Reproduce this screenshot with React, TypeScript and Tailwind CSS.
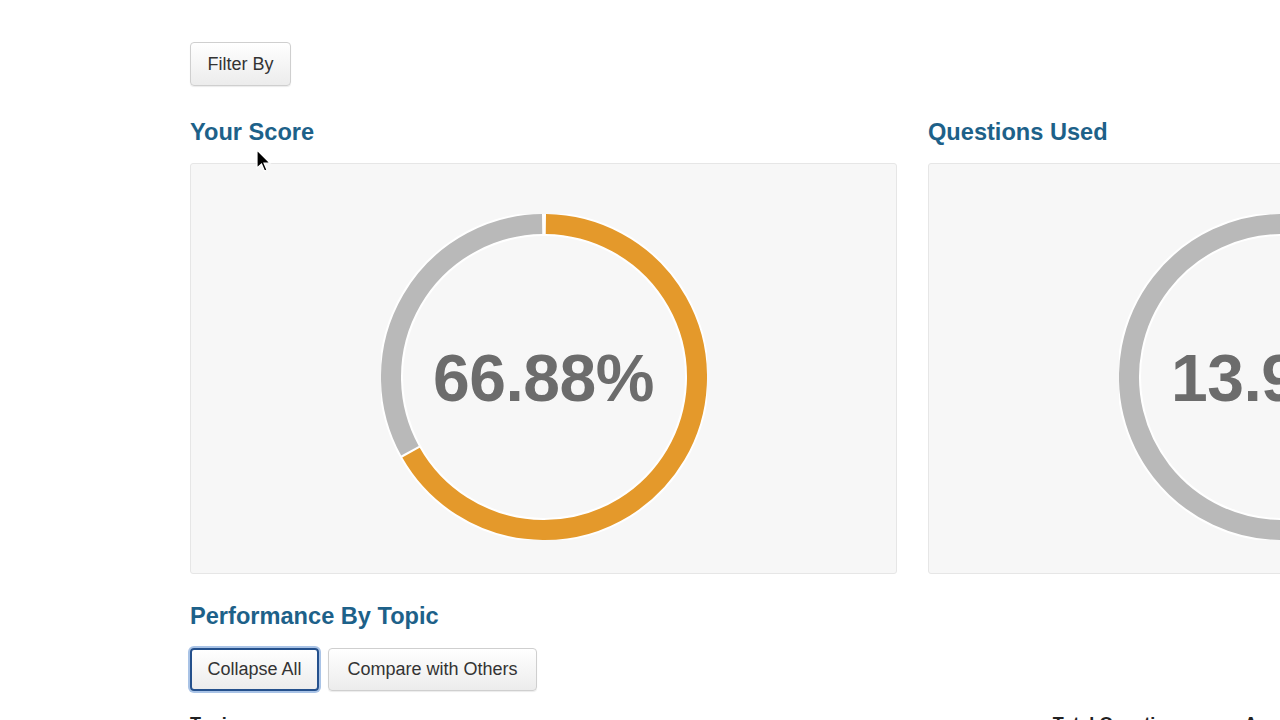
import React from "react";

const R = 153;
const C = 163;

function arc(startDeg: number, endDeg: number) {
  const toXY = (deg: number) => {
    const rad = ((deg - 90) * Math.PI) / 180;
    return [C + R * Math.cos(rad), C + R * Math.sin(rad)];
  };
  const [x1, y1] = toXY(startDeg);
  const [x2, y2] = toXY(endDeg);
  const large = endDeg - startDeg > 180 ? 1 : 0;
  return `M ${x1} ${y1} A ${R} ${R} 0 ${large} 1 ${x2} ${y2}`;
}

function Donut({ pct, label }: { pct: number; label: string }) {
  const end = (pct / 100) * 360;
  return (
    <div className="relative h-[326px] w-[326px]">
      <svg width="326" height="326" viewBox="0 0 326 326" className="absolute inset-0">
        <circle cx={C} cy={C} r={R} fill="none" stroke="#ffffff" strokeWidth="24" />
        <path d={arc(0.7, end - 0.4)} fill="none" stroke="#e4992b" strokeWidth="20" />
        <path d={arc(end + 0.4, 359.3)} fill="none" stroke="#b9b9b9" strokeWidth="20" />
      </svg>
      <div className="absolute inset-0 flex items-center justify-center pt-[1px]">
        <span className="text-[66px] font-bold leading-none tracking-[-0.5px] text-[#6c6c6c]">{label}</span>
      </div>
    </div>
  );
}

function Btn({ children, focused, w }: { children: React.ReactNode; focused?: boolean; w: string }) {
  return (
    <button
      className={
        w +
        " h-[43px] rounded-[4px] bg-gradient-to-b from-white to-[#ececec] text-[18px] text-[#333] shadow-[0_1px_1px_rgba(0,0,0,0.08)] " +
        (focused ? "border-2 border-[#24508c] ring-2 ring-[#a9c3e6]" : "border border-[#cfcfcf]")
      }
    >
      {children}
    </button>
  );
}

export default function App() {
  return (
    <div className="relative h-[720px] w-[1280px] overflow-hidden bg-white font-['Liberation_Sans',Arial,sans-serif]">
      <div className="pl-[190px] pt-[42px]">
        <div className="flex">
          <button className="h-[44px] w-[101px] rounded-[4px] border border-[#cfcfcf] bg-gradient-to-b from-white to-[#ececec] text-[18px] text-[#333] shadow-[0_1px_1px_rgba(0,0,0,0.08)]">
            Filter By
          </button>
        </div>

        <div className="mt-[32px] flex gap-[31px]">
          <div className="w-[707px] shrink-0">
            <h2 className="text-[23.6px] font-bold leading-[28px] text-[#1d6189]">Your Score</h2>
            <div className="mt-[17px] flex h-[411px] justify-center rounded-[3px] border border-[#e6e6e6] bg-[#f7f7f7] pt-[50px]">
              <Donut pct={66.88} label="66.88%" />
            </div>
          </div>
          <div className="w-[707px] shrink-0">
            <h2 className="text-[23.6px] font-bold leading-[28px] text-[#1d6189]">Questions Used</h2>
            <div className="mt-[17px] flex h-[411px] justify-center rounded-[3px] border border-[#e6e6e6] bg-[#f7f7f7] pt-[50px]">
              <Donut pct={13.96} label="13.96%" />
            </div>
          </div>
        </div>

        <h2 className="mt-[28px] text-[23.6px] font-bold leading-[28px] text-[#1d6189]">Performance By Topic</h2>
        <div className="mt-[18px] flex gap-[9px]">
          <Btn focused w="w-[129px]">Collapse All</Btn>
          <Btn w="w-[209px]">Compare with Others</Btn>
        </div>

        <div className="mt-[20px] flex whitespace-nowrap text-[18px] font-bold text-[#222]">
          <span className="shrink-0">Topic</span>
          <span className="ml-[816px] shrink-0">Total Questions</span>
          <span className="ml-[57px] shrink-0">Answered</span>
        </div>
      </div>

      <svg width="16" height="24" viewBox="0 0 16 24" className="absolute left-[256px] top-[149px]">
        <path d="M1 1 L1 19 L5.5 15 L8.5 22 L11 21 L8 14 L14 14 Z" fill="#000" stroke="#fff" strokeWidth="1.2" />
      </svg>
    </div>
  );
}
